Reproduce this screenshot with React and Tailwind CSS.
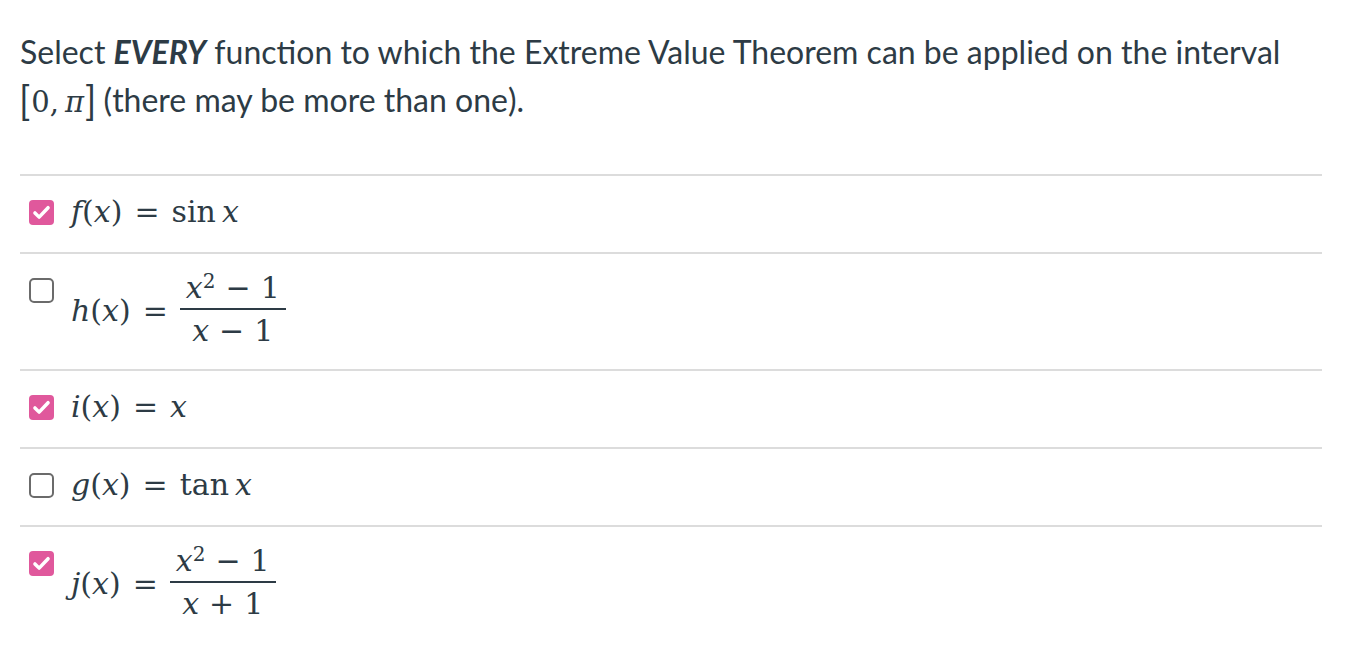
const mathFont = { fontFamily: '"DejaVu Serif", "Liberation Serif", serif' };

const Check = ({ checked }) =>
  checked ? (
    <span className="flex h-[25px] w-[25px] shrink-0 items-center justify-center rounded-[4px] bg-[#e0589c]">
      <svg viewBox="0 0 24 24" className="h-[21px] w-[21px]" fill="none" stroke="white" strokeWidth="4" strokeLinecap="round" strokeLinejoin="round">
        <path d="M4.5 12.5l4.8 4.8L19.5 6.5" />
      </svg>
    </span>
  ) : (
    <span className="block h-[25px] w-[25px] shrink-0 rounded-[5px] border-2 border-[#6b6b6b] bg-white" />
  );

const V = ({ children }) => <span className="italic">{children}</span>;

const Fraction = ({ num, den }) => (
  <span className="ml-[12px] inline-flex flex-col items-center">
    <span className="px-[6px] leading-[40px]">{num}</span>
    <span className="h-[2px] w-full bg-[#2d3b45]" />
    <span className="px-[6px] leading-[42px]">{den}</span>
  </span>
);

const options = [
  {
    checked: true,
    simple: true,
    body: (
      <>
        <V>f</V>(<V>x</V>)<span className="mx-[12px]">=</span>sin<span className="ml-[6px]"><V>x</V></span>
      </>
    ),
  },
  {
    checked: false,
    simple: false,
    name: "h",
    num: (
      <>
        <V>x</V>
        <sup className="text-[20px]">2</sup>
        <span className="mx-[10px]">−</span>1
      </>
    ),
    den: (
      <>
        <V>x</V>
        <span className="mx-[10px]">−</span>1
      </>
    ),
  },
  {
    checked: true,
    simple: true,
    body: (
      <>
        <V>i</V>(<V>x</V>)<span className="mx-[12px]">=</span><V>x</V>
      </>
    ),
  },
  {
    checked: false,
    simple: true,
    body: (
      <>
        <V>g</V>(<V>x</V>)<span className="mx-[12px]">=</span>tan<span className="ml-[6px]"><V>x</V></span>
      </>
    ),
  },
  {
    checked: true,
    simple: false,
    name: "j",
    num: (
      <>
        <V>x</V>
        <sup className="text-[20px]">2</sup>
        <span className="mx-[10px]">−</span>1
      </>
    ),
    den: (
      <>
        <V>x</V>
        <span className="mx-[10px]">+</span>1
      </>
    ),
  },
];

export default function App() {
  return (
    <div className="min-h-screen bg-white px-[20px] pt-[28px] text-[#2d3b45]" style={{ fontFamily: 'Lato, "Open Sans", sans-serif' }}>
      <p className="text-[32px] leading-[48px]">
        Select <strong className="font-bold italic">EVERY</strong> function to which the Extreme Value Theorem can be applied on the interval
        <br />
        <span className="text-[29px]" style={mathFont}>
          <span className="inline-block scale-y-[1.4] font-light">[</span>0,<span className="ml-[6px]"><V>π</V></span>
          <span className="inline-block scale-y-[1.4] font-light">]</span>
        </span>{" "}
        (there may be more than one).
      </p>

      <div className="mt-[48px] w-[1302px]">
        {options.map((o, i) => (
          <div key={i} className={`flex items-start gap-[17px] border-t-2 border-[#dcdcdc] pl-[9px] ${o.simple ? "pt-[24px] pb-[24px]" : "pt-[24px] pb-[17px]"}`}>
            <Check checked={o.checked} />
            {o.simple ? (
              <span className="-mt-[4px] text-[30px] leading-[32px]" style={mathFont}>
                {o.body}
              </span>
            ) : (
              <span className="-mt-[10px] flex items-center text-[30px]" style={mathFont}>
                <span>
                  <V>{o.name}</V>(<V>x</V>)
                </span>
                <span className="ml-[12px]">=</span>
                <Fraction num={o.num} den={o.den} />
              </span>
            )}
          </div>
        ))}
      </div>
    </div>
  );
}
